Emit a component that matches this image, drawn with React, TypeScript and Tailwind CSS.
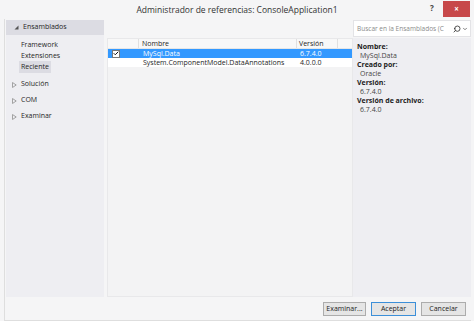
import { Search, ChevronDown, Check } from 'lucide-react'

const refs = [
  { name: 'MySql.Data', version: '6.7.4.0', checked: true, selected: true },
  { name: 'System.ComponentModel.DataAnnotations', version: '4.0.0.0', checked: false, selected: false },
]

const details = [
  { label: 'Nombre:', value: 'MySql.Data' },
  { label: 'Creado por:', value: 'Oracle' },
  { label: 'Versión:', value: '6.7.4.0' },
  { label: 'Versión de archivo:', value: '6.7.4.0' },
]

function Collapsed() {
  return (
    <svg width="5" height="6" viewBox="0 0 5 6" className="shrink-0">
      <path d="M0.5 0.5 L4.2 3 L0.5 5.5 Z" fill="none" stroke="#9a9a9a" strokeWidth="0.9" />
    </svg>
  )
}

function Expanded() {
  return (
    <svg width="5" height="5" viewBox="0 0 5 5" className="shrink-0">
      <path d="M4.5 0.5 L4.5 4.5 L0.5 4.5 Z" fill="#555" />
    </svg>
  )
}

export default function App() {
  return (
    <div
      className="w-[474px] h-[325px] bg-[#f5f5f6] flex flex-col text-[#1e1e1e] overflow-hidden"
      style={{ fontFamily: '"Open Sans", "Noto Sans", sans-serif' }}
    >
      {/* title bar */}
      <div className="h-[19px] flex items-center shrink-0">
        <div className="w-[44px]" />
        <div className="flex-1 text-center text-[8.5px] text-[#333] pt-[1px]">
          Administrador de referencias: ConsoleApplication1
        </div>
        <div className="w-[44px] flex items-start h-full">
          <span className="text-[8px] font-bold text-[#444] mt-[2px] w-[13px]">?</span>
          <div className="w-[27px] h-[16px] bg-[#c7484a] flex items-center justify-center mt-[1px]">
            <span className="text-white text-[8px] font-bold leading-none">×</span>
          </div>
        </div>
      </div>

      {/* body */}
      <div className="flex-1 flex flex-col ml-[4px] mr-[3px] border-l border-b border-[#dedede] min-h-0">
        <div className="flex flex-1 pl-[1px] min-h-0">
          {/* left column */}
          <div className="w-[98px] flex flex-col shrink-0">
            <div className="h-[15px] mt-[1px] bg-[#dcdce3] flex items-center gap-[4px] pl-[8px] text-[7px]">
              <Expanded />
              <span>Ensamblados</span>
            </div>
            <div className="flex-1 bg-[#eeeef2] flex flex-col text-[7px] pt-[4px]">
              <div className="pl-[13px] flex flex-col">
                <span className="h-[11px] leading-[11px] px-[2px]">Framework</span>
                <span className="h-[11px] leading-[11px] px-[2px]">Extensiones</span>
                <span className="h-[12px] leading-[12px] px-[2px] bg-[#dcdce3] self-start">Reciente</span>
              </div>
              <div className="flex items-center gap-[4px] pl-[6px] mt-[6px] h-[11px]">
                <Collapsed />
                <span>Solución</span>
              </div>
              <div className="flex items-center gap-[4px] pl-[6px] mt-[5px] h-[11px]">
                <Collapsed />
                <span>COM</span>
              </div>
              <div className="flex items-center gap-[4px] pl-[6px] mt-[5px] h-[11px]">
                <Collapsed />
                <span>Examinar</span>
              </div>
            </div>
          </div>

          {/* middle column */}
          <div className="w-[246px] ml-[3px] flex flex-col shrink-0">
            <div className="h-[19px] shrink-0" />
            <div className="flex-1 bg-[#f3f3f4] border border-[#e8e8ea] flex flex-col text-[7px]">
              <div className="h-[10px] flex items-center bg-[#f8f8f8] border-b border-[#e6e6e6]">
                <div className="w-[31px] h-full border-r border-[#e0e0e0]" />
                <div className="w-[158px] pl-[3px] h-full border-r border-[#e0e0e0] leading-[10px]">Nombre</div>
                <div className="w-[41px] pl-[2px] h-full border-r border-[#e0e0e0] leading-[10px]">Versión</div>
              </div>
              {refs.map((r) => (
                <div
                  key={r.name}
                  className={`h-[9px] flex items-center ${r.selected ? 'bg-[#3399ff] text-white' : 'bg-white'}`}
                >
                  <div className="w-[31px] pl-[4px] flex items-center">
                    {r.checked && (
                      <div className="w-[8px] h-[8px] bg-white border border-[#777] flex items-center justify-center">
                        <Check size={7} strokeWidth={4} color="#111" />
                      </div>
                    )}
                  </div>
                  <div className="w-[158px] pl-[4px] leading-[9px] truncate">{r.name}</div>
                  <div className="w-[41px] pl-[3px] leading-[9px]">{r.version}</div>
                </div>
              ))}
              <div className="flex-1" />
            </div>
          </div>

          {/* right column */}
          <div className="flex-1 flex flex-col min-w-0">
            <div className="h-[17px] mt-[1px] bg-white border border-[#e3e3e6] flex items-center pl-[3px] pr-[2px] text-[6.5px] text-[#8a8a8a]">
              <span className="flex-1 truncate">Buscar en la Ensamblados (C</span>
              <Search size={8} strokeWidth={2.5} color="#333" className="-scale-x-100" />
              <ChevronDown size={6} strokeWidth={3} color="#555" className="ml-[1px]" />
            </div>
            <div className="flex-1 bg-[#eeeef2] mt-[1px] pt-[4px] pl-[4px] text-[7px] flex flex-col">
              {details.map((d) => (
                <div key={d.label} className="flex flex-col">
                  <span className="font-bold leading-[9px] text-[#222]">{d.label}</span>
                  <span className="leading-[9px] pl-[3px] text-[#444]">{d.value}</span>
                </div>
              ))}
            </div>
          </div>
        </div>

        {/* footer */}
        <div className="h-[23px] flex items-center justify-end gap-[5px] pr-[5px] shrink-0 text-[7px] text-[#222]">
          <button className="w-[43px] h-[14px] bg-[#e5e5e5] border border-[#acacac] leading-none">Examinar...</button>
          <button className="w-[45px] h-[14px] bg-[#e5e5e5] border border-[#3c8fd8] leading-none">Aceptar</button>
          <button className="w-[45px] h-[14px] bg-[#e5e5e5] border border-[#acacac] leading-none">Cancelar</button>
        </div>
      </div>
      <div className="h-[4px] bg-white shrink-0" />
    </div>
  )
}
